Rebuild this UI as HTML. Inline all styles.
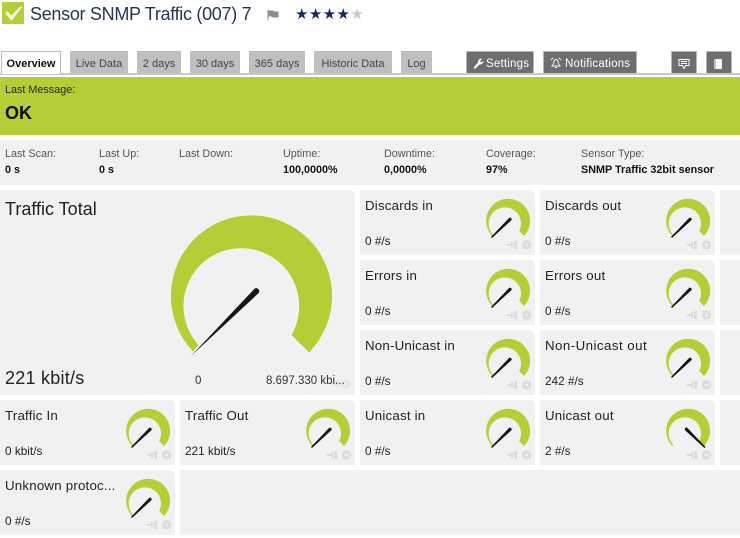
<!DOCTYPE html>
<html><head><meta charset="utf-8"><style>
*{box-sizing:border-box}
html,body{margin:0;padding:0;background:#fff}
body{width:740px;height:538px;position:relative;overflow:hidden;font-family:"Liberation Sans",sans-serif;color:#222}
.a{position:absolute;white-space:nowrap}
.tab{position:absolute;top:51px;height:22px;background:#bdbfc1;color:#444;font-size:11px;line-height:26px;text-align:center}
.btn{position:absolute;top:51px;height:22px;background:#6d6e70;border:1px solid #b5b6b8;border-bottom:0;color:#fff;font-size:11.5px;line-height:25px;letter-spacing:.2px}
.t{position:absolute;background:#f1f1f1;width:175px;height:65px;border-radius:0 5px 0 0}
.t b{position:absolute;left:5px;top:8px;font-weight:normal;font-size:13.3px;line-height:16px;letter-spacing:.2px;color:#222;white-space:nowrap}
.t i{position:absolute;left:5px;top:44px;font-style:normal;font-size:11.8px;line-height:15px;color:#222;white-space:nowrap}
.t svg{position:absolute;left:0;top:0}
.l{position:absolute;top:148px;font-size:10.8px;line-height:13px;color:#555;white-space:nowrap}
.v{position:absolute;top:164px;font-size:10.8px;line-height:13px;font-weight:bold;color:#111;white-space:nowrap}
</style></head><body>
<svg width="0" height="0" style="position:absolute"><defs>
<g id="ic">
<path d="M147,54 h4 v-2 h2 v6 h-2 v-2 h-4 z M154,51 h3 v8 h-3 z" fill="#dcdcdc"/>
<circle cx="166.500" cy="55" r="2.800" fill="none" stroke="#dcdcdc" stroke-width="2.800"/>
<circle cx="166.500" cy="55" r="4.300" fill="none" stroke="#dcdcdc" stroke-width="1.200" stroke-dasharray="1.400 1.400"/>
</g>
<path id="arc" d="M132.300,46 A22,22 0 1 1 164,46 L159.200,41 A16.200,16.200 0 1 0 133.200,44.800 Z" fill="#b5cd36"/>
<g id="g">
<use href="#arc"/>
<path d="M131,47 L148.800,28.200 A1.600,1.600 0 0 1 151.200,30.400 L132,48 Z" fill="#151515"/>
<use href="#ic"/>
</g>
<g id="g2">
<use href="#arc"/>
<path d="M165.500,47 L164.500,48 L145.300,30.500 A1.600,1.600 0 0 1 147.600,28.100 Z" fill="#151515"/>
<use href="#ic"/>
</g>
</defs></svg>

<div class="a" style="left:2px;top:2px;width:22px;height:22px;background:#b5cd36"></div>
<svg class="a" style="left:2px;top:2px" width="22" height="22"><path d="M3,11 L5.500,9 L9,13.500 L19,4 L20,5 L9.500,19 Z" fill="#f4f8dc"/></svg>
<div class="a" style="left:30px;top:2px;font-size:18px;line-height:24px;letter-spacing:-.3px;color:#253650">Sensor SNMP Traffic (007) 7</div>
<svg class="a" style="left:267px;top:10px" width="12" height="10"><path d="M1,0 V10 M2,1 H6 L7,2 H11 V7 H6 L5,6 H2 Z" fill="#8d8d8d" stroke="#8d8d8d" stroke-width="1"/></svg>
<div class="a" style="left:295px;top:5px;font-size:15px;line-height:18px;color:#14295a;letter-spacing:.4px;font-family:'DejaVu Sans',sans-serif">★★★★<span style="color:#c8c8c8">★</span></div>

<div class="a" style="left:0;top:73px;width:740px;height:1.500px;background:#c8c8c8"></div>
<div class="a" style="left:1px;top:51px;width:60px;height:23px;background:#fff;border:1px solid #bbb;border-bottom:0;font-size:11px;font-weight:bold;line-height:25px;text-align:center;color:#111">Overview</div>
<div class="tab" style="left:70px;width:58px">Live Data</div>
<div class="tab" style="left:137px;width:44px">2 days</div>
<div class="tab" style="left:190px;width:50px">30 days</div>
<div class="tab" style="left:249px;width:56px">365 days</div>
<div class="tab" style="left:314px;width:78px">Historic Data</div>
<div class="tab" style="left:401px;width:31px">Log</div>
<div class="btn" style="left:466px;width:68px;padding-left:19px">Settings</div>
<svg class="a" style="left:473px;top:58px" width="11" height="11"><path d="M0.500,9.500 L5,4.500 Q4.500,1.500 8,0.500 L9,1 L7,3 L8,4.500 L10.500,3 Q10,6.500 6.500,6.500 L2,11 Z" fill="#fff"/></svg>
<div class="btn" style="left:543px;width:94px;padding-left:21px">Notifications</div>
<svg class="a" style="left:550px;top:57px" width="12" height="12" fill="none" stroke="#fff" stroke-width=".9"><path d="M2,9 Q4,7 4,4 Q6,1 8,4 Q8,7 10,9 Z M5,10.500 H7 M1,3 L3,1 M11,3 L9,1"/></svg>
<div class="btn" style="left:671px;width:26px"></div>
<svg class="a" style="left:678px;top:58px" width="12" height="12" fill="none" stroke="#fff" stroke-width="1"><path d="M1,1.500 H11 V7.500 H8 L6,10.500 L4.500,7.500 H1 Z M3,3.500 H9 M3,5.500 H9"/></svg>
<div class="btn" style="left:706px;width:26px"></div>
<div class="a" style="left:714px;top:59px;width:8px;height:10px;background:#f6f6f6;border-left:2px solid #c8c8c8"></div>

<div class="a" style="left:0;top:77px;width:740px;height:58px;background:#b5cd36"></div>
<div class="a" style="left:5px;top:83px;font-size:10.800px;line-height:14px;color:#1c2a10">Last Message:</div>
<div class="a" style="left:5px;top:102px;font-size:18px;line-height:22px;font-weight:bold;color:#0d0d0d">OK</div>

<div class="a" style="left:0;top:140px;width:740px;height:45px;background:#f1f1f1"></div>
<div class="l" style="left:5px">Last Scan:</div><div class="v" style="left:5px">0 s</div>
<div class="l" style="left:99px">Last Up:</div><div class="v" style="left:99px">0 s</div>
<div class="l" style="left:179px">Last Down:</div>
<div class="l" style="left:283px">Uptime:</div><div class="v" style="left:283px">100,0000%</div>
<div class="l" style="left:384px">Downtime:</div><div class="v" style="left:384px">0,0000%</div>
<div class="l" style="left:486px">Coverage:</div><div class="v" style="left:486px">97%</div>
<div class="l" style="left:581px">Sensor Type:</div><div class="v" style="left:581px">SNMP Traffic 32bit sensor</div>

<div class="t" style="left:0;top:190px;width:355px;height:205px">
<svg class="a" style="left:0;top:0" width="355" height="205">
<path d="M193,162 A81,81 0 1 1 309,163 L291,145 A57.500,57.500 0 1 0 199,155 Z" fill="#b5cd36" stroke="#fff" stroke-width=".6"/>
<path d="M191,166 L254.400,98.900 A3,3 0 0 1 258.600,103.100 Z" fill="#151515"/>
<path d="M330,192 h3 v-1 h3 v-1 h3 v7 h-3 v-1 h-3 v-2 h-3 z" fill="#e6e6e6"/>
<circle cx="346" cy="194" r="3" fill="none" stroke="#e6e6e6" stroke-width="3"/>
</svg>
<div class="a" style="left:5px;top:8px;font-size:18px;line-height:22px;color:#222">Traffic Total</div>
<div class="a" style="left:5px;top:177px;font-size:18px;line-height:22px;letter-spacing:.25px;color:#222">221 kbit/s</div>
<div class="a" style="left:195px;top:184px;font-size:11.500px;line-height:15px;color:#333">0</div>
<div class="a" style="left:266px;top:184px;font-size:11.500px;line-height:15px;color:#333">8.697.330 kbi...</div>
</div>

<div class="t" style="left:360px;top:190px"><b>Discards in</b><i>0 #/s</i><svg width="175" height="65"><use href="#g"/></svg></div>
<div class="t" style="left:540px;top:190px"><b>Discards out</b><i>0 #/s</i><svg width="175" height="65"><use href="#g"/></svg></div>
<div class="t" style="left:720px;top:190px;width:20px;border-radius:0"></div>
<div class="t" style="left:360px;top:260px"><b>Errors in</b><i>0 #/s</i><svg width="175" height="65"><use href="#g"/></svg></div>
<div class="t" style="left:540px;top:260px"><b>Errors out</b><i>0 #/s</i><svg width="175" height="65"><use href="#g"/></svg></div>
<div class="t" style="left:720px;top:260px;width:20px;border-radius:0"></div>
<div class="t" style="left:360px;top:330px"><b>Non-Unicast in</b><i>0 #/s</i><svg width="175" height="65"><use href="#g"/></svg></div>
<div class="t" style="left:540px;top:330px"><b style="letter-spacing:.45px">Non-Unicast out</b><i>242 #/s</i><svg width="175" height="65"><use href="#g"/></svg></div>
<div class="t" style="left:720px;top:330px;width:20px;border-radius:0"></div>
<div class="t" style="left:0;top:400px"><b>Traffic In</b><i>0 kbit/s</i><svg width="175" height="65"><use href="#g"/></svg></div>
<div class="t" style="left:180px;top:400px"><b>Traffic Out</b><i>221 kbit/s</i><svg width="175" height="65"><use href="#g"/></svg></div>
<div class="t" style="left:360px;top:400px"><b>Unicast in</b><i>0 #/s</i><svg width="175" height="65"><use href="#g"/></svg></div>
<div class="t" style="left:540px;top:400px"><b>Unicast out</b><i>2 #/s</i><svg width="175" height="65"><use href="#g2"/></svg></div>
<div class="t" style="left:720px;top:400px;width:20px;border-radius:0"></div>
<div class="t" style="left:0;top:470px"><b>Unknown protoc...</b><i>0 #/s</i><svg width="175" height="65"><use href="#g"/></svg></div>
<div class="t" style="left:180px;top:470px;width:560px;border-radius:0"></div>
</body></html>
